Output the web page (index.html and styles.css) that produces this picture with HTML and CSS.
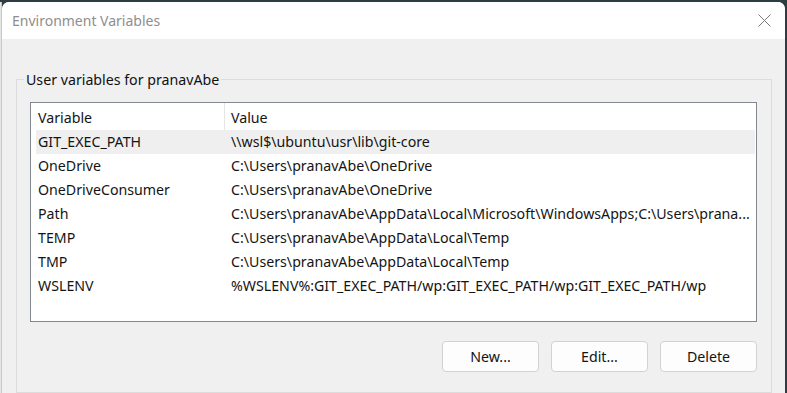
FILE: index.html
```html
<!DOCTYPE html>
<html lang="en">
<head>
<meta charset="utf-8">
<title>Environment Variables</title>
<link rel="stylesheet" href="styles.css">
</head>
<body>
<div class="desk">
  <div class="strip"></div>
  <div class="window">
    <div class="titlebar">
      <span class="title">Environment Variables</span>
      <button class="close" aria-label="Close">
        <svg width="13" height="13" viewBox="0 0 13 13"><path d="M0.5 0.5 L12.5 12.5 M12.5 0.5 L0.5 12.5" stroke="#7a7a7a" stroke-width="1" fill="none"/></svg>
      </button>
    </div>
    <div class="content">
      <div class="group">
        <span class="group-label">User variables for pranavAbe</span>
        <div class="listbox">
          <div class="lv-head">
            <div class="hcell">Variable</div>
            <div class="hcell hcell-val">Value</div>
          </div>
          <div class="lv-row selected"><div class="c1">GIT_EXEC_PATH</div><div class="c2">\\wsl$\ubuntu\usr\lib\git-core</div></div>
          <div class="lv-row"><div class="c1">OneDrive</div><div class="c2">C:\Users\pranavAbe\OneDrive</div></div>
          <div class="lv-row"><div class="c1">OneDriveConsumer</div><div class="c2">C:\Users\pranavAbe\OneDrive</div></div>
          <div class="lv-row"><div class="c1">Path</div><div class="c2">C:\Users\pranavAbe\AppData\Local\Microsoft\WindowsApps;C:\Users\prana...</div></div>
          <div class="lv-row"><div class="c1">TEMP</div><div class="c2">C:\Users\pranavAbe\AppData\Local\Temp</div></div>
          <div class="lv-row"><div class="c1">TMP</div><div class="c2">C:\Users\pranavAbe\AppData\Local\Temp</div></div>
          <div class="lv-row"><div class="c1">WSLENV</div><div class="c2">%WSLENV%:GIT_EXEC_PATH/wp:GIT_EXEC_PATH/wp:GIT_EXEC_PATH/wp</div></div>
        </div>
        <div class="buttons">
          <button class="btn">New...</button>
          <button class="btn">Edit...</button>
          <button class="btn">Delete</button>
        </div>
      </div>
    </div>
  </div>
</div>
</body>
</html>
```
FILE: styles.css
```css
* { box-sizing: border-box; }
html, body {
  margin: 0;
  padding: 0;
  width: 787px;
  height: 393px;
  overflow: hidden;
  background: #2e3c44;
  font-family: "Noto Sans", "Open Sans", sans-serif;
  font-size: 14.2px;
  color: #141414;
}
.desk {
  display: flex;
  height: 393px;
  padding-top: 2px;
}
.strip {
  width: 2px;
  flex-shrink: 0;
  background: #e6e6e6;
  border-right: 1px solid #c8c8c8;
}
.window {
  width: 783px;
  height: 391px;
  flex-shrink: 0;
  background: #f0f0f0;
  border-radius: 7px 7px 0 0;
  overflow: hidden;
  display: flex;
  flex-direction: column;
}
.titlebar {
  height: 37px;
  flex-shrink: 0;
  background: #ffffff;
  display: flex;
  align-items: center;
  justify-content: space-between;
  padding: 0 14px 0 10px;
}
.title {
  color: #8e8e8e;
  font-size: 14px;
}
.close {
  border: 0;
  background: transparent;
  padding: 0;
  width: 13px;
  height: 13px;
  display: flex;
}
.content {
  flex: 1;
  padding: 40px 13px 0 14px;
}
.group {
  position: relative;
  border: 1px solid #dcdcdc;
  height: 314px;
  padding: 22px 14px 0 13px;
}
.group-label {
  position: absolute;
  left: 7px;
  top: -10px;
  padding: 0 2px;
  background: #f0f0f0;
  line-height: 20px;
  color: #111;
}
.listbox {
  height: 220px;
  border: 1px solid #828790;
  background: #ffffff;
}
.lv-head, .lv-row {
  display: grid;
  grid-template-columns: 188px 1fr;
  margin: 0 1px 0 5px;
  white-space: nowrap;
}
.lv-head {
  height: 27px;
}
.hcell {
  padding: 3px 0 0 2px;
  line-height: 24px;
}
.hcell-val {
  border-left: 1px solid #e5e5e5;
  padding-left: 6px;
}
.lv-row {
  height: 24px;
  line-height: 24px;
}
.lv-row.selected {
  background: #efefef;
}
.c1 { padding-left: 2px; overflow: hidden; }
.c2 { padding-left: 7px; overflow: hidden; }
.buttons {
  display: flex;
  justify-content: flex-end;
  gap: 12px;
  margin-top: 19px;
}
.btn {
  width: 97px;
  height: 31px;
  border: 1px solid #d2d2d2;
  border-radius: 4px;
  background: #fdfdfd;
  font-family: inherit;
  font-size: 14.2px;
  color: #141414;
  padding: 0;
}
```
